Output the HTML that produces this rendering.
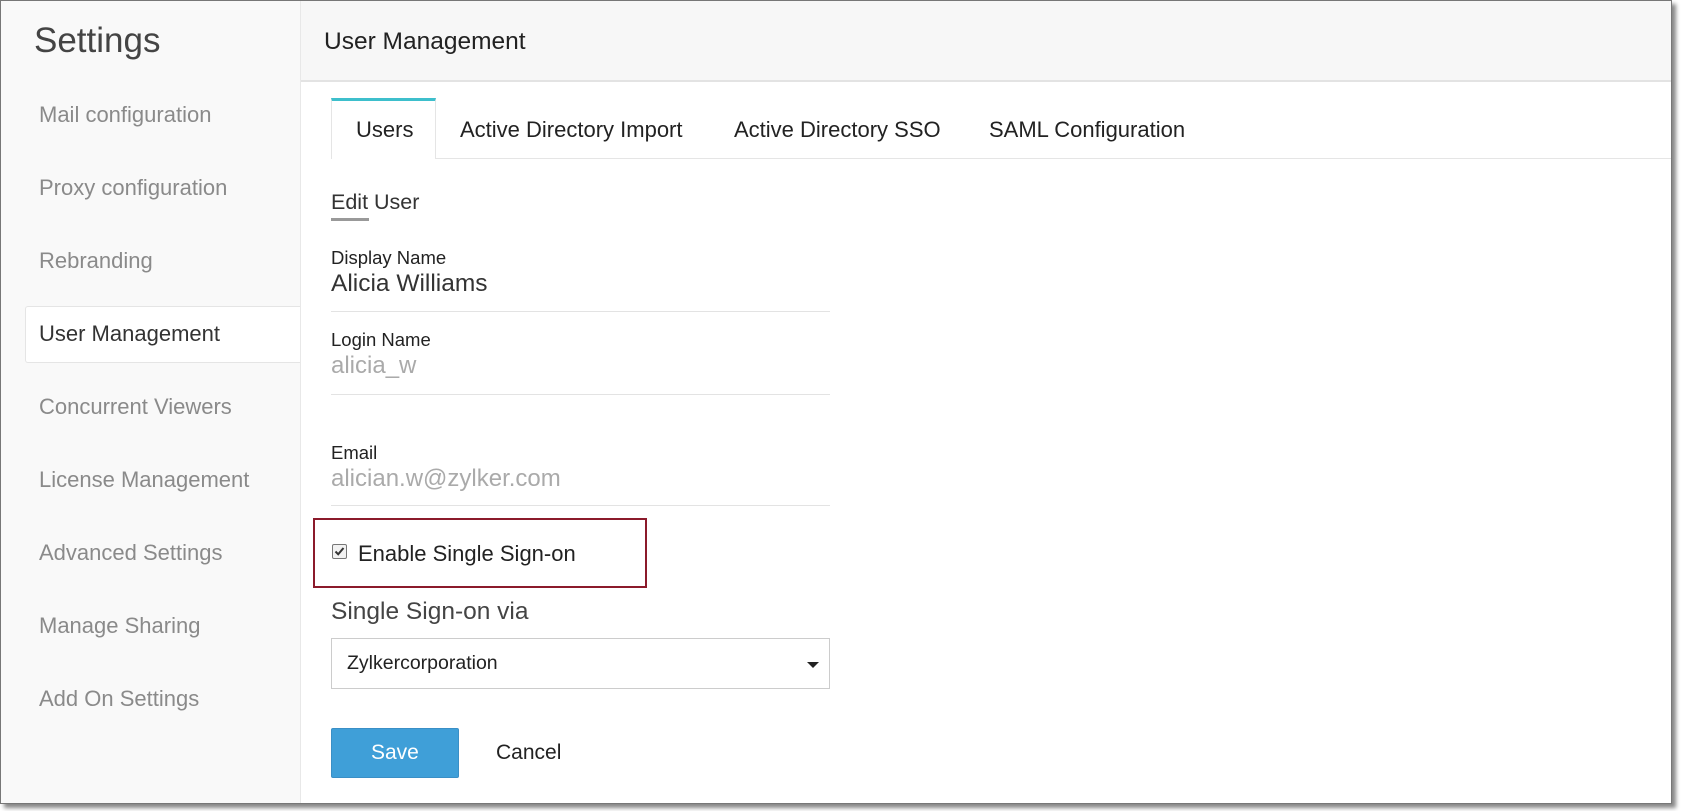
<!DOCTYPE html>
<html><head><meta charset="utf-8"><style>
*{margin:0;padding:0;box-sizing:border-box}
body{width:1685px;height:811px;background:#fff;font-family:"Liberation Sans",sans-serif;position:relative;overflow:hidden}
.frame{position:absolute;left:0;top:0;width:1672px;height:804px;border:1px solid #777;box-shadow:4px 4px 4px #888;background:#fff;overflow:hidden}
.side{position:absolute;left:0;top:0;width:299px;height:804px;background:#f9f9f9}
.t{position:absolute;white-space:nowrap;line-height:1}
.mi{position:absolute;left:38px;font-size:22px;color:#8a8a8a;white-space:nowrap;line-height:1}
.main{position:absolute;left:299px;top:0;right:0;bottom:0;background:#fff;border-left:1px solid #e8e8e8}
.hdr{position:absolute;left:0;right:0;top:0;height:81px;background:#f7f7f7;border-bottom:2px solid #e3e3e3}
.line{position:absolute;left:330px;width:499px;height:1px;background:#e3e3e3}
.lab{font-size:18.5px;color:#222}
.tab{position:absolute;top:118px;font-size:22px;color:#222;white-space:nowrap;line-height:1}
</style></head><body>
<div class="frame">
<div class="side">
<div class="t" style="left:33px;top:22px;font-size:35px;color:#444">Settings</div>
<div class="mi" style="top:103px">Mail configuration</div>
<div class="mi" style="top:176px">Proxy configuration</div>
<div class="mi" style="top:249px">Rebranding</div>
<div style="position:absolute;left:24px;top:305px;width:276px;height:57px;background:#fff;border:1px solid #e5e5e5;border-right:none;border-radius:3px 0 0 3px"></div>
<div class="mi" style="top:322px;color:#333">User Management</div>
<div class="mi" style="top:395px">Concurrent Viewers</div>
<div class="mi" style="top:468px">License Management</div>
<div class="mi" style="top:541px">Advanced Settings</div>
<div class="mi" style="top:614px">Manage Sharing</div>
<div class="mi" style="top:687px">Add On Settings</div>
</div>
<div class="main">
<div class="hdr"><div class="t" style="left:23px;top:29px;font-size:24.5px;color:#222">User Management</div></div>
</div>
<div style="position:absolute;left:330px;right:0;top:157px;height:1px;background:#e5e5e5"></div>
<div style="position:absolute;left:330px;top:97px;width:105px;height:61px;background:#fff;border-top:3px solid #3dbfcc;border-left:1px solid #e5e5e5;border-right:1px solid #e5e5e5"></div>
<div class="tab" style="left:355px">Users</div>
<div class="tab" style="left:459px">Active Directory Import</div>
<div class="tab" style="left:733px">Active Directory SSO</div>
<div class="tab" style="left:988px">SAML Configuration</div>
<div class="t" style="left:330px;top:191px;font-size:21.5px;color:#333">Edit User</div>
<div style="position:absolute;left:330px;top:217px;width:38px;height:3px;background:#999"></div>
<div class="t lab" style="left:330px;top:248px">Display Name</div>
<div class="t" style="left:330px;top:271px;font-size:24.5px;color:#333">Alicia Williams</div>
<div class="line" style="top:310px"></div>
<div class="t lab" style="left:330px;top:330px">Login Name</div>
<div class="t" style="left:330px;top:353px;font-size:24px;color:#aaa">alicia_w</div>
<div class="line" style="top:393px"></div>
<div class="t lab" style="left:330px;top:443px">Email</div>
<div class="t" style="left:330px;top:466px;font-size:24px;color:#aaa">alician.w@zylker.com</div>
<div class="line" style="top:504px"></div>
<div style="position:absolute;left:312px;top:517px;width:334px;height:70px;border:2px solid #8b1a2b"></div>
<div style="position:absolute;left:331px;top:543px;width:15px;height:15px;border:1px solid #777;border-radius:2px;background:#f2f2f2"><svg width="13" height="13" viewBox="0 0 13 13" style="position:absolute;left:0;top:0"><path d="M2.5 6.5 L5.2 9.3 L10.5 3" stroke="#333" stroke-width="2" fill="none"/></svg></div>
<div class="t" style="left:357px;top:542px;font-size:22px;color:#222">Enable Single Sign-on</div>
<div class="t" style="left:330px;top:599px;font-size:24.5px;color:#444">Single Sign-on via</div>
<div style="position:absolute;left:330px;top:637px;width:499px;height:51px;border:1px solid #ccc;background:#fff"></div>
<div class="t" style="left:346px;top:653px;font-size:19.5px;color:#222">Zylkercorporation</div>
<div style="position:absolute;left:806px;top:661px;width:0;height:0;border-left:6px solid transparent;border-right:6px solid transparent;border-top:6px solid #222"></div>
<div style="position:absolute;left:330px;top:727px;width:128px;height:50px;background:#3f9fd8;border:1px solid #3a8fc6;border-radius:2px"></div>
<div class="t" style="left:370px;top:741px;font-size:21px;color:#fff">Save</div>
<div class="t" style="left:495px;top:741px;font-size:21px;color:#222">Cancel</div>
</div>
</body></html>
